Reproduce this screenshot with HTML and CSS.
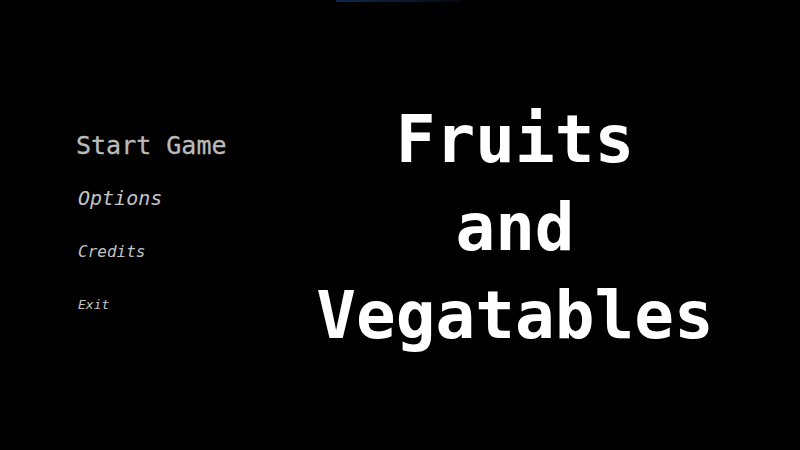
FILE: index.html
```html
<!DOCTYPE html>
<html lang="en">
<head>
    <meta charset="UTF-8">
    <meta name="viewport" content="width=device-width, initial-scale=1.0">
    <title>Fruits and Vegatables</title>
    <link rel="stylesheet" href="styles.css">
</head>
<body>
    <div class="glow"></div>
    <div class="screen">
        <nav class="menu">
            <div class="menu_item start">Start Game</div>
            <div class="menu_item options">Options</div>
            <div class="menu_item credits">Credits</div>
            <div class="menu_item exit">Exit</div>
        </nav>
        <h1 class="title">Fruits<br>and<br>Vegatables</h1>
    </div>
</body>
</html>
```

FILE: styles.css
```css
* {
    padding: 0;
    margin: 0;
    box-sizing: border-box;
    font-family: 'DejaVu Sans Mono', 'Liberation Mono', monospace;
}
body {
    width: 800px;
    height: 450px;
    background: #000;
    overflow: hidden;
    display: flex;
    flex-direction: column;
}
/* thin light leak along the top edge */
.glow {
    height: 2px;
    width: 126px;
    margin-left: 336px;
    background: linear-gradient(to right, #12305a, #0b1d38 60%, #05080f);
    opacity: 0.8;
}
.screen {
    flex: 1;
    display: flex;
    align-items: center;
    margin-top: -2px;
}
.menu {
    width: 230px;
    display: flex;
    flex-direction: column;
    padding-left: 78px;
    color: #c4c4c4;
}
.menu_item {
    height: 53px;
    line-height: 53px;
    font-style: italic;
    cursor: pointer;
}
.start {
    font-size: 25px;
    font-style: normal;
    margin-left: -2px;
    color: #bababa;
    -webkit-text-stroke: 0.3px #bababa;
}
.options {
    font-size: 20px;
}
.credits {
    font-size: 16px;
}
.exit {
    font-size: 13px;
}
.title {
    flex: 1;
    text-align: center;
    color: #fff;
    font-size: 66px;
    font-weight: bold;
    line-height: 88px;
    padding-top: 5px;
}
```
